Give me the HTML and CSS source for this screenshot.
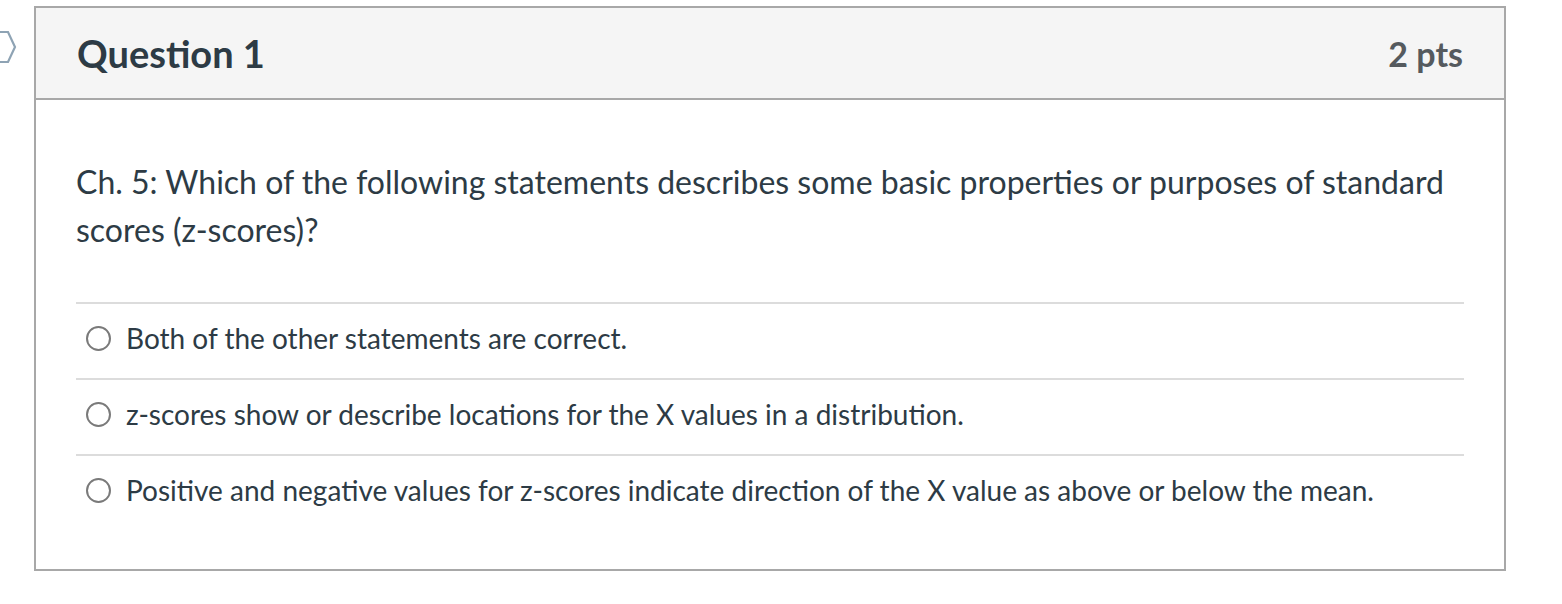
FILE: index.html
```html
<!DOCTYPE html>
<html>
<head>
<meta charset="utf-8">
<link rel="stylesheet" href="styles.css">
</head>
<body>
<div class="page">
  <div class="flag">
    <svg width="20" height="34" viewBox="0 0 20 34"><polyline points="-4,2 8,2 15,17 8,32 -4,32" fill="none" stroke="#8ea3b4" stroke-width="2.2" stroke-linejoin="miter"/></svg>
  </div>
  <div class="question">
    <div class="q-header">
      <h2 class="q-title">Question 1</h2>
      <div class="q-pts">2 pts</div>
    </div>
    <div class="q-body">
      <p class="q-text">Ch. 5: Which of the following statements describes some basic properties or purposes of standard scores (z-scores)?</p>
      <div class="answers">
        <label class="answer"><span class="radio"></span><span class="answer-text">Both of the other statements are correct.</span></label>
        <label class="answer"><span class="radio"></span><span class="answer-text">z-scores show or describe locations for the X values in a distribution.</span></label>
        <label class="answer"><span class="radio"></span><span class="answer-text">Positive and negative values for z-scores indicate direction of the X value as above or below the mean.</span></label>
      </div>
    </div>
  </div>
</div>
</body>
</html>
```
FILE: styles.css
```css
html, body {
  margin: 0;
  padding: 0;
  background: #ffffff;
}
body {
  font-family: Lato, "Noto Sans", sans-serif;
  color: #2d3b45;
}
.page {
  position: relative;
  padding: 6px 0 0 34px;
  width: 1472px;
}
.flag {
  position: absolute;
  left: 0;
  top: 30px;
  width: 20px;
  height: 34px;
}
.flag svg {
  display: block;
  overflow: visible;
}
.question {
  border: 2px solid #a8a8a8;
  background: #fff;
}
.q-header {
  display: flex;
  justify-content: space-between;
  align-items: center;
  background: #f5f5f5;
  border-bottom: 2px solid #a8a8a8;
  height: 90px;
  padding: 0 41px;
}
.q-title {
  margin: 0;
  font-size: 38px;
  font-weight: 700;
  color: #2d3b45;
}
.q-pts {
  font-size: 34px;
  font-weight: 700;
  color: #555a5e;
}
.q-body {
  padding: 58px 40px 39px 40px;
}
.q-text {
  margin: 0 0 48px 0;
  font-size: 32px;
  line-height: 48px;
}
.answers {
  display: flex;
  flex-direction: column;
}
.answer {
  display: flex;
  align-items: center;
  gap: 15px;
  border-top: 2px solid #dcdcdc;
  height: 68px;
  padding: 0 0 6px 10px;
  font-size: 28px;
}
.radio {
  width: 21px;
  height: 21px;
  border: 2px solid #7a7a7a;
  border-radius: 50%;
  flex: none;
}
```
